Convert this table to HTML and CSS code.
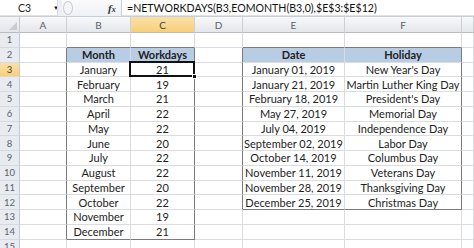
FILE: index.html
```html
<!DOCTYPE html>
<html>
<head>
<meta charset="utf-8">
<link rel="stylesheet" href="styles.css">
</head>
<body>
<div class="fbar">
  <div class="namebox"><span class="nb-text">C3</span><span class="nb-arrow">▼</span></div>
  <div class="grip"></div>
  <div class="midzone"><span class="oval"></span><span class="fx"><i>f</i><i class="x">x</i></span></div>
  <div class="formula">=NETWORKDAYS(B3,EOMONTH(B3,0),$E$3:$E$12)</div>
</div>
<div class="sheet">
  <div class="corner"><span class="tri"></span></div>
  <div class="ch">A</div><div class="ch">B</div><div class="ch act">C</div><div class="ch">D</div><div class="ch">E</div><div class="ch">F</div><div class="ch"></div>

  <div class="rh">1</div><div class="c"></div><div class="c bb-d"></div><div class="c bb-d"></div><div class="c"></div><div class="c bb-d"></div><div class="c bb-d"></div><div class="c"></div>

  <div class="rh">2</div><div class="c br-d"></div><div class="c th">Month</div><div class="c th br-d">Workdays</div><div class="c br-d"></div><div class="c th">Date</div><div class="c th br-d">Holiday</div><div class="c"></div>

  <div class="rh act">3</div><div class="c br-d"></div><div class="c">January</div><div class="c br-d sel">21<span class="handle"></span></div><div class="c br-d"></div><div class="c">January 01, 2019</div><div class="c br-d">New Year's Day</div><div class="c"></div>

  <div class="rh">4</div><div class="c br-d"></div><div class="c">February</div><div class="c br-d">19</div><div class="c br-d"></div><div class="c">January 21, 2019</div><div class="c br-d">Martin Luther King Day</div><div class="c"></div>

  <div class="rh">5</div><div class="c br-d"></div><div class="c">March</div><div class="c br-d">21</div><div class="c br-d"></div><div class="c">February 18, 2019</div><div class="c br-d">President's Day</div><div class="c"></div>

  <div class="rh">6</div><div class="c br-d"></div><div class="c">April</div><div class="c br-d">22</div><div class="c br-d"></div><div class="c">May 27, 2019</div><div class="c br-d">Memorial Day</div><div class="c"></div>

  <div class="rh">7</div><div class="c br-d"></div><div class="c">May</div><div class="c br-d">22</div><div class="c br-d"></div><div class="c">July 04, 2019</div><div class="c br-d">Independence Day</div><div class="c"></div>

  <div class="rh">8</div><div class="c br-d"></div><div class="c">June</div><div class="c br-d">20</div><div class="c br-d"></div><div class="c">September 02, 2019</div><div class="c br-d">Labor Day</div><div class="c"></div>

  <div class="rh">9</div><div class="c br-d"></div><div class="c">July</div><div class="c br-d">22</div><div class="c br-d"></div><div class="c">October 14, 2019</div><div class="c br-d">Columbus Day</div><div class="c"></div>

  <div class="rh">10</div><div class="c br-d"></div><div class="c">August</div><div class="c br-d">22</div><div class="c br-d"></div><div class="c">November 11, 2019</div><div class="c br-d">Veterans Day</div><div class="c"></div>

  <div class="rh">11</div><div class="c br-d"></div><div class="c">September</div><div class="c br-d">20</div><div class="c br-d"></div><div class="c">November 28, 2019</div><div class="c br-d">Thanksgiving Day</div><div class="c"></div>

  <div class="rh">12</div><div class="c br-d"></div><div class="c">October</div><div class="c br-d">22</div><div class="c br-d"></div><div class="c bb-d">December 25, 2019</div><div class="c br-d bb-d">Christmas Day</div><div class="c"></div>

  <div class="rh">13</div><div class="c br-d"></div><div class="c">November</div><div class="c br-d">19</div><div class="c"></div><div class="c"></div><div class="c"></div><div class="c"></div>

  <div class="rh">14</div><div class="c br-d"></div><div class="c bb-d">December</div><div class="c br-d bb-d">21</div><div class="c"></div><div class="c"></div><div class="c"></div><div class="c"></div>

  <div class="rh">15</div><div class="c"></div><div class="c"></div><div class="c"></div><div class="c"></div><div class="c"></div><div class="c"></div><div class="c"></div>
</div>
</body>
</html>
```

FILE: styles.css
```css
* { box-sizing: border-box; }
html, body { margin: 0; padding: 0; background: #fff; }
body {
  width: 474px;
  height: 248px;
  overflow: hidden;
  font-family: Lato, "Open Sans", sans-serif;
}

.fbar {
  display: flex;
  height: 17px;
  background: linear-gradient(#f6f7f9, #e9ecf0);
  border-bottom: 1px solid #c9ced5;
}
.namebox {
  width: 57px;
  background: #fff;
  display: flex;
  align-items: center;
  font-size: 10.5px;
  color: #222;
  border-bottom: 1px solid #dfe3e8;
}
.nb-text { margin-left: 18px; }
.nb-arrow { margin-left: 22px; font-size: 6px; color: #111; }
.grip {
  width: 5px;
  background: #eceef1;
  border-left: 1px solid #d7dbe0;
}
.midzone {
  width: 59px;
  display: flex;
  align-items: center;
  background: linear-gradient(#fbfbfc, #eef0f3);
}
.oval {
  width: 10px;
  height: 14px;
  border-radius: 50%;
  border: 1px solid #c9cdd3;
  background: #f4f5f7;
  margin-left: 1px;
}
.fx {
  margin-left: 35px;
  font-family: "Liberation Serif", serif;
  font-size: 11px;
  color: #333;
  font-weight: bold;
}
.fx .x { font-size: 8px; }
.formula {
  flex: 1;
  background: #fff;
  border-left: 1px solid #c9ced5;
  display: flex;
  align-items: center;
  padding-left: 5px;
  font-size: 10.6px;
  color: #111;
  white-space: nowrap;
  overflow: hidden;
  border-bottom: 1px solid #dfe3e8;
}

.sheet {
  display: grid;
  grid-template-columns: 20px 47px 64px 64px 48px 102px 117px 1fr;
  grid-template-rows: 16px repeat(15, 14.75px);
}
.corner {
  background: linear-gradient(#f3f4f6, #e3e6ea);
  border-right: 1px solid #c5c9cf;
  border-bottom: 1px solid #b8bdc4;
  position: relative;
}
.tri {
  position: absolute;
  right: 2px;
  bottom: 2px;
  width: 0;
  height: 0;
  border-left: 8px solid transparent;
  border-bottom: 8px solid #c8ccd2;
}
.ch {
  background: linear-gradient(#f7f8fa, #e4e7eb);
  border-right: 1px solid #cdd1d6;
  border-bottom: 1px solid #b8bdc4;
  font-size: 10px;
  color: #5a5f66;
  display: flex;
  align-items: center;
  justify-content: center;
}
.ch.act {
  background: linear-gradient(#fbe1a6, #f6cf7b);
  color: #4a4030;
}
.rh {
  background: #e8ebef;
  border-right: 1px solid #c5c9cf;
  border-bottom: 1px solid #d6dade;
  font-size: 9.5px;
  color: #5a6470;
  display: flex;
  align-items: center;
  justify-content: center;
}
.rh.act {
  background: linear-gradient(#fbe1a6, #f6cf7b);
  color: #4a4030;
}
.c {
  border-right: 1px solid #dadcdf;
  border-bottom: 1px solid #dadcdf;
  font-size: 11px;
  color: #222;
  display: flex;
  align-items: center;
  justify-content: center;
  white-space: nowrap;
  position: relative;
}
.c.th {
  background: #b8cce4;
  font-weight: bold;
}
.c.br-d { border-right-color: #7b7b7b; }
.c.bb-d { border-bottom-color: #7b7b7b; }
.c.sel::after {
  content: "";
  position: absolute;
  left: -2px;
  top: -2px;
  right: -1px;
  bottom: -1px;
  border: 2px solid #111;
}
.handle {
  position: absolute;
  right: -3px;
  bottom: -3px;
  width: 5px;
  height: 5px;
  background: #111;
  border: 1px solid #fff;
  z-index: 2;
}
```
